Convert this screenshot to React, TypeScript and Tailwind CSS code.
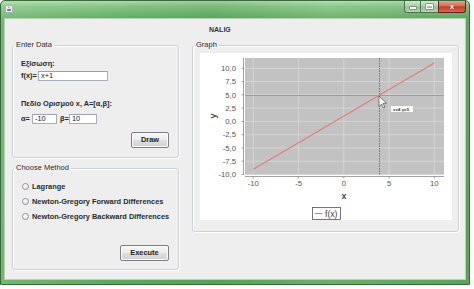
import React from "react";

function Fieldset({
  title,
  className,
  children,
}: {
  title: string;
  className: string;
  children?: React.ReactNode;
}) {
  return (
    <fieldset
      className={
        "border border-[#cbd3da] rounded-[3px] shadow-[inset_1px_1px_0_#ffffff,1px_1px_0_#ffffff] min-w-0 " +
        className
      }
    >
      <legend className="ml-[1px] px-[2px] text-[7.5px] leading-[10px] text-[#2a2a2a]">
        {title}
      </legend>
      {children}
    </fieldset>
  );
}

function TextField({ value, className }: { value: string; className: string }) {
  return (
    <div
      className={
        "h-[10px] bg-white border border-[#a9afb8] border-t-[#9aa1ab] pl-[2px] text-[7.4px] leading-[8px] text-[#222] " +
        className
      }
    >
      {value}
    </div>
  );
}

function Button({ label, className }: { label: string; className: string }) {
  return (
    <div
      className={
        "h-[16px] flex items-center justify-center rounded-[2px] border border-[#7b7f85] bg-[linear-gradient(to_bottom,#f6f6f6_0%,#ececec_50%,#dedede_52%,#d2d2d2_100%)] shadow-[inset_0_0_0_1px_#fbfbfb] text-[7.4px] font-bold text-[#222] " +
        className
      }
    >
      {label}
    </div>
  );
}

function Radio({ label }: { label: string }) {
  return (
    <div className="h-[15px] flex items-center pl-[9px] gap-[3px]">
      <div className="w-[7px] h-[7px] rounded-full border border-[#8c939b] bg-[radial-gradient(circle_at_35%_35%,#ffffff_0%,#f0f0f0_50%,#d9dde1_100%)]" />
      <span className="text-[7.4px] font-bold leading-[10px] text-[#2a2a2a]">{label}</span>
    </div>
  );
}

function Chart() {
  const X = (v: number) => 143.8 + 9.05 * v;
  const Y = (v: number) => 68.4 - 5.31 * v;
  const yt = [10, 7.5, 5, 2.5, 0, -2.5, -5, -7.5, -10];
  const xt = [-10, -5, 0, 5, 10];
  const ff = "Liberation Sans, DejaVu Sans, sans-serif";
  return (
    <svg width="252" height="167" viewBox="0 0 252 167" className="block bg-white">
      <rect x="45" y="5" width="199" height="117" fill="#c2c2c2" />
      {xt.map((v) => (
        <line key={"gx" + v} x1={X(v)} x2={X(v)} y1="5" y2="122" stroke="#d9d9d9" strokeWidth="0.8" />
      ))}
      {yt.map((v) => (
        <line key={"gy" + v} x1="45" x2="244" y1={Y(v)} y2={Y(v)} stroke="#d9d9d9" strokeWidth="0.8" />
      ))}
      {/* axes */}
      <line x1="43.5" x2="43.5" y1="5" y2="122" stroke="#8a8a8a" strokeWidth="0.8" />
      <line x1="45" x2="244" y1="123.5" y2="123.5" stroke="#8a8a8a" strokeWidth="0.8" />
      {yt.map((v) => (
        <g key={"ty" + v}>
          <line x1="41.5" x2="43.5" y1={Y(v)} y2={Y(v)} stroke="#8a8a8a" strokeWidth="0.8" />
          <text x="36" y={Y(v) + 2.7} textAnchor="end" fontSize="7.7" fill="#555" fontFamily={ff}>
            {v.toFixed(1).replace(".", ",")}
          </text>
        </g>
      ))}
      {xt.map((v) => (
        <g key={"tx" + v}>
          <line x1={X(v)} x2={X(v)} y1="123.5" y2="125.5" stroke="#8a8a8a" strokeWidth="0.8" />
          <text x={X(v)} y="133" textAnchor="middle" fontSize="7.7" fill="#555" fontFamily={ff}>
            {String(v)}
          </text>
        </g>
      ))}
      {/* axis labels */}
      <text x="16" y="63" textAnchor="middle" fontSize="9" fontWeight="bold" fill="#444" fontFamily={ff} transform="rotate(-90 16 63)">
        y
      </text>
      <text x="144" y="146" textAnchor="middle" fontSize="9" fontWeight="bold" fill="#444" fontFamily={ff}>
        x
      </text>
      {/* crosshair */}
      <line x1="179.5" x2="179.5" y1="5" y2="122" stroke="#5e5e5e" strokeWidth="0.8" strokeDasharray="1.5 1" />
      <line x1="45" x2="244" y1="42.5" y2="42.5" stroke="#929292" strokeWidth="0.8" />
      {/* series */}
      <line x1={X(-10)} y1={Y(-9)} x2={X(10)} y2={Y(11)} stroke="#e27c7c" strokeWidth="1.1" />
      {/* tooltip */}
      <rect x="191" y="53" width="22" height="6" fill="#ffffff" />
      <text x="193" y="57.6" fontSize="4.4" fontWeight="bold" fill="#333" fontFamily={ff}>
        x=4 y=5
      </text>
      {/* cursor */}
      <path
        d="M179 43 L179 53.5 L181.5 51 L183.5 55 L185 54.3 L183 50.3 L186.5 50.3 Z"
        fill="#ffffff"
        stroke="#333"
        strokeWidth="0.6"
        strokeLinejoin="round"
      />
      {/* legend */}
      <rect x="112.5" y="154.5" width="28" height="12" fill="#fff" stroke="#555" strokeWidth="0.8" />
      <line x1="115" x2="122.5" y1="160.5" y2="160.5" stroke="#e27c7c" strokeWidth="1.1" />
      <text x="125" y="163.8" fontSize="8.6" fill="#444" fontFamily={ff}>
        f(x)
      </text>
    </svg>
  );
}

export default function App() {
  return (
    <div className="w-[474px] h-[289px] bg-white font-['Liberation_Sans','DejaVu_Sans',sans-serif]">
      <div className="w-[470px] h-[285px] flex flex-col rounded-t-[5px] border border-[#3a6a3a] bg-[linear-gradient(to_right,rgba(255,255,255,0.14)_0%,rgba(0,0,0,0)_25%,rgba(0,60,0,0.08)_45%,rgba(255,255,255,0.08)_70%,rgba(0,0,0,0.04)_100%),linear-gradient(to_bottom,#acdcac_0px,#86c586_5px,#72b872_12px,#62aa62_18px,#5ea85e_100%)]">
        {/* title bar */}
        <div className="h-[17px] flex items-start">
          <div className="ml-[4px] mt-[4px] w-[8px] h-[8px]">
            <svg width="8" height="8" viewBox="0 0 8 8">
              <rect x="0.5" y="0.5" width="7" height="7" rx="1" fill="#eef2f6" stroke="#8b97a3" strokeWidth="0.6" />
              <path d="M2 5.5 Q4 7 6 5.5 L6 4 L2 4 Z" fill="#5b7fb5" />
              <path d="M3.5 1.5 Q3 2.5 4 3.3 M4.8 1.8 Q4.3 2.6 5 3.3" stroke="#d04a3a" strokeWidth="0.6" fill="none" />
            </svg>
          </div>
          <div className="ml-auto mr-[3px] flex h-[12px]">
            <div className="w-[16px] h-[12px] rounded-bl-[3px] border border-r-0 border-t-0 border-[#4b774b] bg-[linear-gradient(to_bottom,#d2e8d2,#a6cba6_50%,#92bf92_51%,#b0d4b0)] flex items-center justify-center">
              <div className="w-[6px] h-[2px] bg-white mt-[3px] shadow-[0_0_0_0.5px_#4d6d4d]" />
            </div>
            <div className="w-[18px] h-[12px] border border-r-0 border-t-0 border-[#4b774b] bg-[linear-gradient(to_bottom,#d2e8d2,#a6cba6_50%,#92bf92_51%,#b0d4b0)] flex items-center justify-center">
              <div className="w-[7px] h-[5px] border border-white border-t-2 shadow-[0_0_0_0.5px_#4d6d4d]" />
            </div>
            <div className="w-[28px] h-[12px] rounded-br-[3px] border border-t-0 border-[#5a2a22] bg-[linear-gradient(to_bottom,#eaa495,#d66a54_45%,#c63c22_55%,#dc684c)] flex items-center justify-center">
              <span className="text-[8px] leading-[8px] font-bold text-white [text-shadow:0_0_1px_#5a1a10]">x</span>
            </div>
          </div>
        </div>
        {/* client area */}
        <div className="flex-1 mx-[3px] mb-[4px] border border-[#b4d2b4] bg-[#eeeeee] flex flex-col">
          <div className="h-[21px] flex items-center pl-[204px]">
            <span className="text-[7px] font-bold text-[#333] leading-[10px]">NALIG</span>
          </div>
          <div className="flex pl-[7px] gap-[13px]">
            {/* left column */}
            <div className="w-[167px] flex flex-col">
              <Fieldset title="Enter Data" className="h-[118px]">
                <div className="flex flex-col pl-[8px] pr-[9px]">
                  <div className="mt-[9px] text-[7.4px] font-bold leading-[10px] text-[#2a2a2a]">Εξίσωση:</div>
                  <div className="mt-[2px] flex items-center">
                    <span className="w-[17px] text-[7.4px] font-bold leading-[10px] text-[#2a2a2a]">f(x)=</span>
                    <TextField value="x+1" className="w-[70px]" />
                  </div>
                  <div className="mt-[18px] text-[7.4px] font-bold leading-[10px] text-[#2a2a2a]">
                    Πεδίο Ορισμού x, A=[α,β]:
                  </div>
                  <div className="mt-[5px] flex items-center">
                    <span className="w-[11px] text-[7.4px] font-bold leading-[10px] text-[#2a2a2a]">α=</span>
                    <TextField value="-10" className="w-[25px]" />
                    <span className="ml-[3px] w-[9px] text-[7.4px] font-bold leading-[10px] text-[#2a2a2a]">β=</span>
                    <TextField value="10" className="w-[28px]" />
                  </div>
                  <div className="mt-[8px] flex justify-end">
                    <Button label="Draw" className="w-[38px]" />
                  </div>
                </div>
              </Fieldset>
              <Fieldset title="Choose Method" className="mt-[5px] h-[107px]">
                <div className="flex flex-col">
                  <div className="mt-[6px]">
                    <Radio label="Lagrange" />
                    <Radio label="Newton-Gregory Forward Differences" />
                    <Radio label="Newton-Gregory Backward Differences" />
                  </div>
                  <div className="mt-[21px] flex justify-end pr-[9px]">
                    <Button label="Execute" className="w-[49px]" />
                  </div>
                </div>
              </Fieldset>
            </div>
            {/* right column */}
            <div className="w-[267px]">
              <Fieldset title="Graph" className="h-[192px]">
                <div className="mt-[3px] ml-[7px] w-[252px]">
                  <Chart />
                </div>
              </Fieldset>
            </div>
          </div>
        </div>
      </div>
    </div>
  );
}
